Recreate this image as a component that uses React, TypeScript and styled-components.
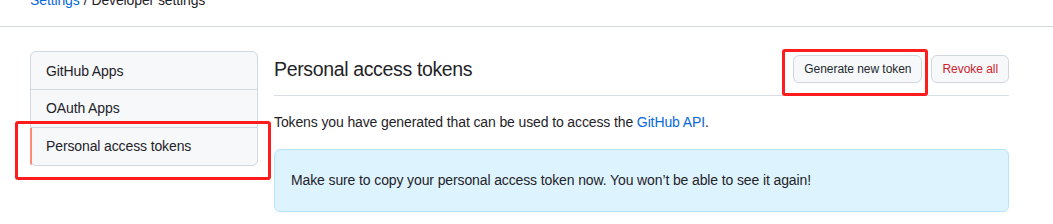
import React from "react";
import styled, { createGlobalStyle } from "styled-components";

const GlobalStyle = createGlobalStyle`
  html, body {
    margin: 0;
    padding: 0;
    background: #ffffff;
    overflow: hidden;
  }
  body {
    font-family: "Liberation Sans", Arial, sans-serif;
    font-size: 14px;
    line-height: 21px;
    letter-spacing: -0.12px;
    color: #1f2328;
  }
`;

const Page = styled.div`
  width: 1053px;
  height: 224px;
  overflow: hidden;
`;

const Breadcrumb = styled.div`
  margin-top: -10px;
  padding: 0 30px 15px;
  height: 21px;
  border-bottom: 1px solid #d0d7de;
  white-space: nowrap;
  color: #1f2328;
`;

const Crumb = styled.a`
  color: #0969da;
  text-decoration: none;
`;

const Sep = styled.span`
  margin: 0 4px;
  color: #1f2328;
`;

const Layout = styled.div`
  display: flex;
  gap: 16px;
  padding: 24px 44px 0 30px;
`;

const SideNav = styled.nav`
  width: 228px;
  flex-shrink: 0;
  align-self: flex-start;
  box-sizing: border-box;
  background: #f6f8fa;
  border: 1px solid #d0d7de;
  border-radius: 6px;
`;

const NavItem = styled.a<{ $selected?: boolean }>`
  position: relative;
  display: block;
  padding: 8px 15px;
  color: #1f2328;
  text-decoration: none;
  border-top: 1px solid #d0d7de;

  &:first-child {
    border-top: none;
    height: 21px;
    padding: 9px 15px 7px;
  }

  &:last-child {
    border-radius: 0 0 6px 6px;
  }

  ${({ $selected }) =>
    $selected &&
    `
    &::before {
      content: "";
      position: absolute;
      left: -1px;
      top: 0;
      bottom: 0;
      width: 2px;
      background: #fd8c73;
      border-bottom-left-radius: 6px;
    }
  `}
`;

const Highlight = styled.span<{ $top: number; $right: number; $bottom: number; $left: number }>`
  position: absolute;
  top: ${({ $top }) => $top}px;
  right: ${({ $right }) => $right}px;
  bottom: ${({ $bottom }) => $bottom}px;
  left: ${({ $left }) => $left}px;
  border: 3px solid #fe1c1c;
  border-radius: 3px;
  pointer-events: none;
`;

const Main = styled.main`
  flex: 1;
  min-width: 0;
`;

const Header = styled.div`
  display: flex;
  align-items: center;
  padding: 4px 0 12px;
  border-bottom: 1px solid #d8dee4;
`;

const Title = styled.h2`
  flex: 1;
  margin: 0;
  font-size: 19.5px;
  font-weight: 400;
  line-height: 28px;
  letter-spacing: -0.35px;
  color: #1f2328;
`;

const Actions = styled.div`
  display: flex;
  gap: 9px;
`;

const ButtonWrap = styled.div`
  position: relative;
`;

const Button = styled.button<{ $danger?: boolean }>`
  display: block;
  height: 28px;
  padding: 0 10px;
  font-family: inherit;
  font-size: 12px;
  letter-spacing: -0.05px;
  color: ${({ $danger }) => ($danger ? "#cf222e" : "#24292f")};
  background: #f6f8fa;
  border: 1px solid #d0d7de;
  border-radius: 6px;
  cursor: pointer;
`;

const Intro = styled.p`
  margin: 16px 0;
`;

const Link = styled.a`
  color: #0969da;
  text-decoration: none;
`;

const Flash = styled.div`
  padding: 20px 16px;
  background: #ddf4ff;
  border: 1px solid #b6e3ff;
  border-radius: 6px;
`;

export default function App() {
  return (
    <Page>
      <GlobalStyle />
      <Breadcrumb>
        <Crumb href="#">Settings</Crumb>
        <Sep>/</Sep>
        Developer settings
      </Breadcrumb>
      <Layout>
        <SideNav>
          <NavItem href="#">GitHub Apps</NavItem>
          <NavItem href="#">OAuth Apps</NavItem>
          <NavItem href="#" $selected>
            Personal access tokens
            <Highlight $top={-7} $right={-14} $bottom={-15} $left={-16} />
          </NavItem>
        </SideNav>
        <Main>
          <Header>
            <Title>Personal access tokens</Title>
            <Actions>
              <ButtonWrap>
                <Button>Generate new token</Button>
                <Highlight $top={-6} $right={-6} $bottom={-13} $left={-11} />
              </ButtonWrap>
              <Button $danger>Revoke all</Button>
            </Actions>
          </Header>
          <Intro>
            Tokens you have generated that can be used to access the <Link href="#">GitHub API</Link>.
          </Intro>
          <Flash>
            Make sure to copy your personal access token now. You won’t be able to see it again!
          </Flash>
        </Main>
      </Layout>
    </Page>
  );
}
